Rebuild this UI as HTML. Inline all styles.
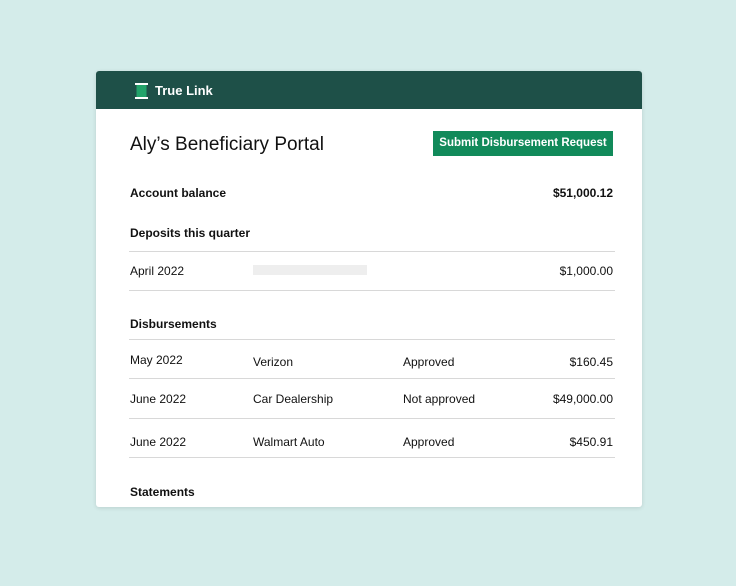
<!DOCTYPE html>
<html><head><style>
body{margin:0;width:736px;height:586px;background:#d4ecea;font-family:"Liberation Sans",sans-serif;position:relative;overflow:hidden;color:#111}
.card{position:absolute;left:96px;top:71px;width:546px;height:436px;background:#fff;border-radius:3px;box-shadow:0 1px 4px rgba(0,0,0,.12);overflow:hidden}
.hdr{height:38px;background:#1e5048;position:relative}
.logo{position:absolute;left:39px;top:12px;width:13px;height:16px}
.brand{position:absolute;left:59px;top:12px;color:#fff;font-weight:bold;font-size:13px}
.t{position:absolute;font-size:12px;white-space:nowrap}
.b{font-weight:bold}
.line{position:absolute;left:33px;width:486px;height:1px;background:#d8d8d8}
.btn{position:absolute;left:337px;top:60px;width:180px;height:25px;background:#118a5a;color:#fff;font-weight:bold;font-size:11.5px;line-height:25px;text-align:center}
</style></head><body>
<div class="card">
<div class="hdr">
<svg class="logo" viewBox="0 0 13 16"><rect x="0" y="0" width="13" height="2" fill="#fff"/><rect x="1.5" y="2" width="10" height="12" fill="#22a36a"/><rect x="0" y="14" width="13" height="2" fill="#fff"/></svg>
<div class="brand">True Link</div></div>
<div class="t" style="left:34px;top:63px;font-size:19px">Aly’s Beneficiary Portal</div>
<div class="btn">Submit Disbursement Request</div>
<div class="t b" style="left:34px;top:115px">Account balance</div>
<div class="t b" style="right:29px;top:115px">$51,000.12</div>
<div class="t b" style="left:34px;top:155px">Deposits this quarter</div>
<div class="line" style="top:180px"></div>
<div class="t" style="left:34px;top:193px">April 2022</div>
<div style="position:absolute;left:157px;top:194px;width:114px;height:10px;background:#eee"></div>
<div class="t" style="right:29px;top:193px">$1,000.00</div>
<div class="line" style="top:219px"></div>
<div class="t b" style="left:34px;top:246px">Disbursements</div>
<div class="line" style="top:268px"></div>
<div class="t" style="left:34px;top:282px">May 2022</div><div class="t" style="left:157px;top:284px">Verizon</div><div class="t" style="left:307px;top:284px">Approved</div><div class="t" style="right:29px;top:284px">$160.45</div>
<div class="line" style="top:307px"></div>
<div class="t" style="left:34px;top:321px">June 2022</div><div class="t" style="left:157px;top:321px">Car Dealership</div><div class="t" style="left:307px;top:321px">Not approved</div><div class="t" style="right:29px;top:321px">$49,000.00</div>
<div class="line" style="top:347px"></div>
<div class="t" style="left:34px;top:364px">June 2022</div><div class="t" style="left:157px;top:364px">Walmart Auto</div><div class="t" style="left:307px;top:364px">Approved</div><div class="t" style="right:29px;top:364px">$450.91</div>
<div class="line" style="top:386px"></div>
<div class="t b" style="left:34px;top:414px">Statements</div>
</div>
</body></html>
